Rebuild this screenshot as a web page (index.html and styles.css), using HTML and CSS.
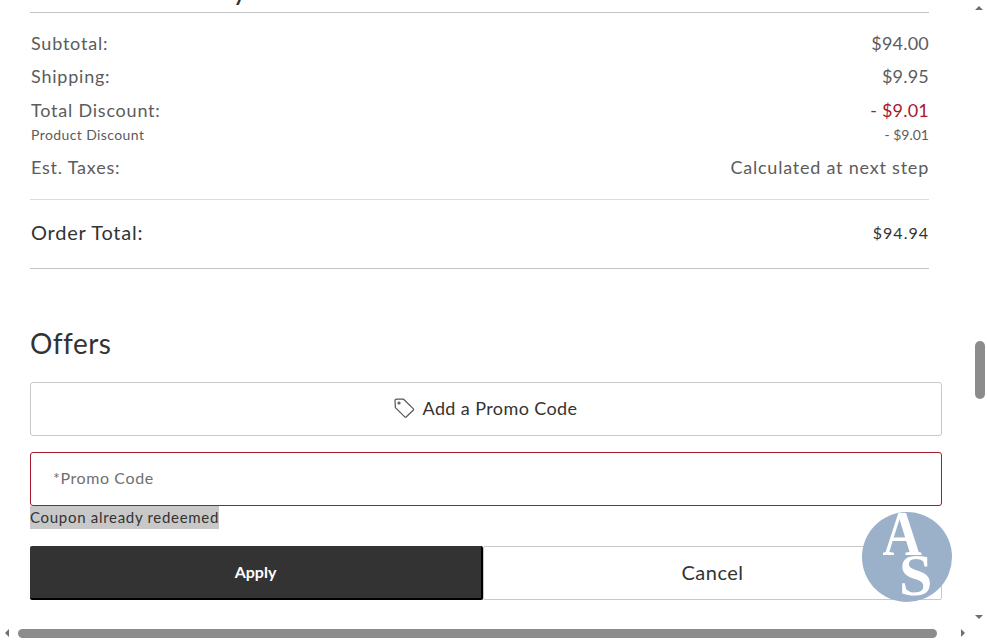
FILE: index.html
```html
<!DOCTYPE html>
<html lang="en">
<head>
  <meta charset="UTF-8">
  <meta name="viewport" content="width=device-width, initial-scale=1.0">
  <title>Checkout</title>
  <link rel="stylesheet" href="styles.css">
</head>
<body>
  <div class="window">
    <main class="content">
      <section class="summary">
        <h2 class="summary-title">Order Summary</h2>
        <div class="rows">
          <div class="row"><span>Subtotal:</span><span class="value">$94.00</span></div>
          <div class="row"><span>Shipping:</span><span class="value">$9.95</span></div>
          <div class="row row-discount"><span>Total Discount:</span><span class="value red">- $9.01</span></div>
          <div class="row row-small"><span>Product Discount</span><span class="value">- $9.01</span></div>
          <div class="row row-taxes"><span>Est. Taxes:</span><span>Calculated at next step</span></div>
        </div>
        <div class="total"><span class="total-label">Order Total:</span><span class="total-value">$94.94</span></div>
      </section>
      <section class="offers">
        <h2 class="offers-title">Offers</h2>
        <button class="promo-toggle" type="button">
          <svg class="tag-icon" width="22" height="22" viewBox="0 0 22 22" fill="none" stroke="#55565a" stroke-width="1.2" stroke-linejoin="round">
            <path d="M2 3.6 C2 2.8 2.7 2.2 3.5 2.2 L10.6 2.2 L20.2 11.6 C20.7 12.1 20.7 12.8 20.2 13.3 L13.4 19.8 C12.9 20.3 12.2 20.3 11.7 19.8 L2.4 10.6 Z"/>
            <circle cx="6" cy="6" r="1"/>
          </svg>
          <span>Add a Promo Code</span>
        </button>
        <div class="promo-input">*Promo Code</div>
        <div class="promo-error"><span>Coupon already redeemed</span></div>
        <div class="actions">
          <button class="btn btn-apply" type="button">Apply</button>
          <button class="btn btn-cancel" type="button">Cancel</button>
        </div>
      </section>
    </main>

    <div class="logo-badge">
      <span class="logo-a">A</span>
      <span class="logo-s">S</span>
    </div>

    <div class="scroll-v">
      <span class="arrow arrow-up"></span>
      <span class="thumb-v"></span>
      <span class="arrow arrow-down"></span>
    </div>
    <div class="scroll-h">
      <span class="arrow arrow-left"></span>
      <span class="thumb-h"></span>
      <span class="arrow arrow-right"></span>
    </div>
  </div>
</body>
</html>
```

FILE: styles.css
```css
html, body {
  margin: 0;
  height: 100%;
  overflow: hidden;
  background-color: #ffffff;
}
body {
  font-family: "Lato", "Open Sans", sans-serif;
  color: #333333;
}
.window {
  position: relative;
  width: 987px;
  height: 641px;
  overflow: hidden;
}
.content {
  width: 912px;
  padding-left: 30px;
}
.summary {
  width: 899px;
}
.summary-title {
  margin: -30px 0 0 0;
  height: 43px;
  line-height: 36px;
  box-sizing: border-box;
  font-size: 30px;
  font-weight: 400;
  letter-spacing: 0.8px;
  color: #333333;
  border-bottom: 1px solid #c4c4c4;
}
.rows {
  padding-top: 14px;
  padding-bottom: 15px;
  border-bottom: 1px solid #dcdcdc;
  color: #5c5c5c;
  font-size: 18px;
  letter-spacing: 0.78px;
}
.row {
  display: flex;
  justify-content: space-between;
  height: 33px;
  line-height: 33px;
  padding-left: 1px;
}
.row .value {
  letter-spacing: 0.2px;
}
.row-discount {
  height: 29px;
  margin-top: 1px;
}
.row-small {
  height: 29px;
  line-height: 24px;
  font-size: 14px;
  letter-spacing: 0.4px;
}
.row-small .value {
  letter-spacing: 0;
}
.row-taxes {
  height: 32px;
  line-height: 30px;
}
.red {
  color: #a6192e;
}
.total {
  display: flex;
  justify-content: space-between;
  align-items: center;
  height: 64px;
  padding: 0 0 4px 1px;
  border-bottom: 1px solid #c4c4c4;
  color: #333333;
}
.total-label {
  font-size: 20px;
  letter-spacing: 0.75px;
}
.total-value {
  font-size: 16px;
  letter-spacing: 1px;
}
.offers-title {
  margin: 56px 0 20px 0;
  font-size: 28px;
  line-height: 37px;
  font-weight: 400;
  letter-spacing: 0.5px;
  color: #333333;
}
.promo-toggle {
  display: flex;
  align-items: center;
  justify-content: center;
  gap: 8px;
  width: 100%;
  height: 54px;
  padding: 0 2px 2px 0;
  background-color: #ffffff;
  border: 1px solid #c8c8c8;
  border-radius: 3px;
  font-family: inherit;
  font-size: 18px;
  letter-spacing: 0.4px;
  color: #333333;
}
.tag-icon {
  flex: none;
}
.promo-input {
  box-sizing: border-box;
  height: 54px;
  margin-top: 16px;
  padding-left: 22px;
  line-height: 50px;
  border: 1px solid #a6192e;
  border-radius: 3px;
  font-size: 16px;
  letter-spacing: 0.6px;
  color: #6f6f6f;
}
.promo-error {
  height: 24px;
  line-height: 23px;
  font-size: 15px;
  letter-spacing: 0.7px;
  margin-bottom: 16px;
}
.promo-error span {
  display: inline-block;
  background-color: #c8c8c8;
  color: #333333;
}
.actions {
  display: flex;
}
.btn {
  height: 54px;
  padding: 0 0 2px 0;
  font-family: inherit;
  border-radius: 2px;
}
.btn-apply {
  flex: 0 0 453px;
  background-color: #333333;
  border: none;
  border-right: 2px solid #000000;
  border-bottom: 2px solid #000000;
  font-size: 16px;
  font-weight: 700;
  color: #ffffff;
}
.btn-cancel {
  flex: 1;
  background-color: #ffffff;
  border: 1px solid #c8c8c8;
  font-size: 20px;
  letter-spacing: 0.5px;
  color: #333333;
}
.logo-badge {
  position: absolute;
  left: 862px;
  top: 512px;
  width: 90px;
  height: 90px;
  border-radius: 50%;
  background-color: #9bb1ca;
  font-family: "Liberation Serif", serif;
  color: #ffffff;
}
.logo-a {
  position: absolute;
  left: 17px;
  top: 1px;
  font-size: 64px;
  font-weight: 700;
  line-height: 42px;
  transform: scaleX(0.85);
}
.logo-s {
  position: absolute;
  left: 37px;
  top: 43px;
  font-size: 60px;
  font-weight: 700;
  line-height: 40px;
}
.scroll-v {
  position: absolute;
  right: 0;
  top: 0;
  width: 14px;
  height: 628px;
}
.thumb-v {
  position: absolute;
  left: 2px;
  top: 341px;
  width: 10px;
  height: 58px;
  border-radius: 5px;
  background-color: #8c8c8c;
}
.scroll-h {
  position: absolute;
  left: 0;
  top: 628px;
  width: 973px;
  height: 13px;
}
.thumb-h {
  position: absolute;
  left: 18px;
  top: 1px;
  width: 919px;
  height: 9px;
  border-radius: 5px;
  background-color: #8c8c8c;
}
.arrow {
  position: absolute;
  width: 0;
  height: 0;
  border-style: solid;
  border-color: transparent;
}
.arrow-up {
  left: 2px;
  top: 6px;
  border-width: 0 4px 4px 4px;
  border-bottom-color: #6f6f6f;
}
.arrow-down {
  left: 2px;
  top: 615px;
  border-width: 4px 4px 0 4px;
  border-top-color: #6f6f6f;
}
.arrow-left {
  left: 5px;
  top: 1px;
  border-width: 4px 4px 4px 0;
  border-right-color: #6f6f6f;
}
.arrow-right {
  left: 961px;
  top: 1px;
  border-width: 4px 0 4px 4px;
  border-left-color: #6f6f6f;
}
```
